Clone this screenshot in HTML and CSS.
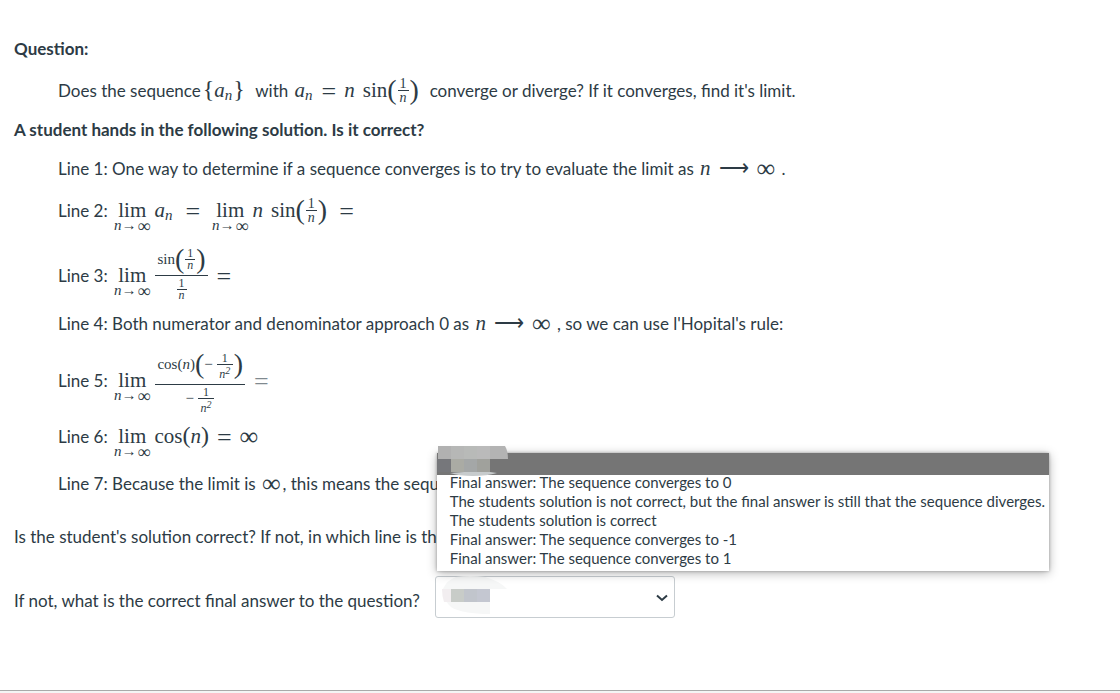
FILE: index.html
```
<!DOCTYPE html>
<html lang="en">
<head>
    <meta charset="UTF-8">
    <meta name="viewport" content="width=device-width, initial-scale=1.0">
    <title>Question</title>
    <link rel="stylesheet" href="styles.css">
</head>
<body>
    <main class="question">
        <p><strong>Question:</strong></p>
        <p class="indent">Does the sequence<span class="math"><span class="brace">{</span><i>a</i><sub>n</sub><span class="brace">}</span></span>&nbsp; with <span class="math"><i>a</i><sub>n</sub><span class="rel">=</span><i>n</i><span class="op">sin</span><span class="paren">(</span><span class="frac"><span>1</span><i>n</i></span><span class="paren">)</span></span>&nbsp; converge or diverge? If it converges, find it's limit.</p>
        <p><strong>A student hands in the following solution. Is it correct?</strong></p>
        <p class="indent">Line 1: One way to determine if a sequence converges is to try to evaluate the limit as <span class="math"><i>n</i><span class="arrow">⟶</span><span class="inf">∞</span></span> .</p>
        <p class="indent">Line 2: <span class="math"><span class="lim"><span>lim</span><small><i>n</i>→<span class="inf">∞</span></small></span><i>a</i><sub>n</sub><span class="rel wide">=</span><span class="lim"><span>lim</span><small><i>n</i>→<span class="inf">∞</span></small></span><i>n</i><span class="op">sin</span><span class="paren">(</span><span class="frac"><span>1</span><i>n</i></span><span class="paren">)</span><span class="rel wide">=</span></span></p>
        <p class="indent">Line 3: <span class="math"><span class="lim"><span>lim</span><small><i>n</i>→<span class="inf">∞</span></small></span><span class="frac big"><span class="num">sin<span class="paren">(</span><span class="frac tiny"><span>1</span><i>n</i></span><span class="paren">)</span></span><span class="den"><span class="frac tiny"><span>1</span><i>n</i></span></span></span><span class="rel">=</span></span></p>
        <p class="indent">Line 4: Both numerator and denominator approach 0 as <span class="math"><i>n</i><span class="arrow">⟶</span><span class="inf">∞</span></span> , so we can use l'Hopital's rule:</p>
        <p class="indent">Line 5: <span class="math"><span class="lim"><span>lim</span><small><i>n</i>→<span class="inf">∞</span></small></span><span class="frac big"><span class="num">cos(<i>n</i>)<span class="paren">(</span>−<span class="frac tiny power"><span>1</span><span><i>n</i><sup>2</sup></span></span><span class="paren">)</span></span><span class="den">−<span class="frac tiny power"><span>1</span><span><i>n</i><sup>2</sup></span></span></span></span><span class="rel faint">=</span></span></p>
        <p class="indent">Line 6: <span class="math"><span class="lim"><span>lim</span><small><i>n</i>→<span class="inf">∞</span></small></span>cos<span class="brace">(</span><i>n</i><span class="brace">)</span><span class="rel">=</span><span class="inf">∞</span></span></p>
        <p class="indent">Line 7: Because the limit is <span class="math"><span class="inf">∞</span></span>, this means the sequence diverges.</p>
        <p class="answer">Is the student's solution correct? If not, in which line is the error?</p>
        <div class="answer">
            <label for="final">If not, what is the correct final answer to the question?</label>
            <div class="dropdown">
                <select id="final" name="final">
                    <option value=""></option>
                    <option>Final answer: The sequence converges to 0</option>
                    <option>The students solution is not correct, but the final answer is still that the sequence diverges.</option>
                    <option>The students solution is correct</option>
                    <option>Final answer: The sequence converges to -1</option>
                    <option>Final answer: The sequence converges to 1</option>
                </select>
                <svg class="chevron" width="12" height="8" viewBox="0 0 12 8" aria-hidden="true"><path d="M1 1.500L6 6l5-4.500" fill="none" stroke="#2d3b45" stroke-width="2"/></svg>
                <svg class="smudge-value" width="66" height="39" viewBox="0 0 66 39" aria-hidden="true">
                    <path d="M1 13Q5 4 14 1q14-2 29 0 15 4 22 12H48v25Q20 38 9 31Q2 25 1 13z" fill="#f6f7f7"/>
                    <path d="M0 13h9v13H2Q0 20 0 13z" fill="#f2eef0"/>
                    <path d="M9 13h13v13H9z" fill="#c8ccc8"/>
                    <path d="M22 13h13v13H22z" fill="#c1c5cc"/>
                    <path d="M35 13h13v13H35z" fill="#c4c7d1"/>
                </svg>
                <ul class="menu" role="listbox">
                    <li class="selected" role="option" aria-selected="true"></li>
                    <li role="option">Final answer: The sequence converges to 0</li>
                    <li role="option">The students solution is not correct, but the final answer is still that the sequence diverges.</li>
                    <li role="option">The students solution is correct</li>
                    <li role="option">Final answer: The sequence converges to -1</li>
                    <li role="option">Final answer: The sequence converges to 1</li>
                </ul>
                <svg class="smudge-menu" width="71" height="30" viewBox="0 0 71 30" aria-hidden="true">
                    <path d="M1 0h13v13H1z" fill="#b1b1b1"/>
                    <path d="M14 0h13v13H14z" fill="#b6b7b6"/>
                    <path d="M27 0h13v13H27z" fill="#b8bab8"/>
                    <path d="M40 0h13v13H40z" fill="#bababa"/>
                    <path d="M53 0h15q3 5 3 13H53z" fill="#b3b3b3"/>
                    <path d="M0 13h14v13H0z" fill="#76777b"/>
                    <path d="M14 13h13v13H14z" fill="#aaaba4"/>
                    <path d="M27 13h13v13H27z" fill="#a4a7a7"/>
                    <path d="M40 13h13v13H40z" fill="#a0a19c"/>
                    <path d="M13 27l14-1h26l7 1q-10 3-24 3t-23-3z" fill="#c7cbcc"/>
                </svg>
            </div>
        </div>
    </main>
    <footer class="footer"></footer>
</body>
</html>
```

FILE: styles.css
```
* {
    box-sizing: border-box;
}

body {
    display: flex;
    flex-direction: column;
    min-height: 100vh;
    margin: 0;
    background-color: #fff;
    color: #2d3b45;
    font-family: Lato, sans-serif;
    font-size: 17px;
    line-height: 24px;
}

.question {
    flex: 1;
    padding: 37px 14px 0;
}

p {
    margin: 0 0 15px;
    white-space: nowrap;
}

.indent {
    padding-left: 44px;
}

/* formulas */
.math {
    margin: 0 2px;
    font-family: "Liberation Serif", serif;
    font-size: 21px;
    line-height: 20px;
}

sub,
sup {
    font-size: 15px;
    font-style: italic;
    line-height: 0;
}

sub {
    margin-right: 1px;
    vertical-align: -3px;
}

.brace {
    font-size: 24px;
    line-height: 0;
}

.rel {
    margin: 0 8px;
    font-size: 26px;
    line-height: 0;
    vertical-align: -3px;
}

.wide {
    margin: 0 12px;
}

.faint {
    opacity: 0.6;
}

.op {
    margin-left: 8px;
}

.inf {
    font-size: 26px;
    line-height: 0;
    vertical-align: -2px;
}

.arrow {
    margin: 0 8px;
}

.lim {
    display: inline-flex;
    flex-direction: column;
    align-items: center;
    margin-right: 4px;
}

.lim small {
    font-size: 15px;
    line-height: 11px;
}

.lim .inf {
    margin-left: 1px;
    font-size: 18px;
}

.paren {
    font-size: 28px;
    line-height: 0;
    vertical-align: -2px;
}

.frac {
    display: inline-flex;
    flex-direction: column;
    align-items: center;
    margin: 1px 1px -1px;
    vertical-align: 9px;
    font-size: 14px;
    line-height: 13px;
}

.frac > :first-child {
    align-self: stretch;
    padding: 0 2px;
    border-bottom: 1px solid;
    text-align: center;
}

.big {
    margin: 2px 1px -4px;
    vertical-align: 18px;
    font-size: 15px;
}

.big > .num {
    padding: 0 2px 4px;
}

.big .paren {
    vertical-align: -4px;
}

.den {
    padding-top: 2px;
}

.tiny {
    margin: 0 1px;
    vertical-align: 7px;
    font-size: 12px;
    line-height: 11px;
}

.power {
    margin-left: 4px;
}

.power > :first-child {
    padding: 0 5px;
}

.power > :last-child {
    padding-top: 4px;
}

.tiny sup {
    font-size: 10px;
    vertical-align: 4px;
}

/* answers */
.answer {
    display: flex;
    align-items: center;
    gap: 15px;
    min-height: 42px;
    margin: 20px 0 0;
    white-space: nowrap;
}

.answer + .answer {
    margin-top: 18px;
}

.answer label {
    padding-top: 8px;
}

.dropdown {
    position: relative;
    width: 240px;
}

select {
    display: block;
    width: 100%;
    height: 42px;
    padding: 0 12px;
    border: 1px solid #c7cdd1;
    border-radius: 3px;
    background-color: #fff;
    color: inherit;
    font: inherit;
    appearance: none;
}

.chevron {
    position: absolute;
    top: 18px;
    right: 7px;
}

.menu {
    position: absolute;
    bottom: 47px;
    left: 2px;
    margin: 0;
    padding: 0 0 3px;
    background-color: #fff;
    box-shadow: 0 0 3px rgba(0, 0, 0, 0.3), 0 2px 10px rgba(0, 0, 0, 0.3);
    font-size: 15px;
    line-height: 19px;
    list-style: none;
}

.menu li {
    padding: 0 4px 0 13px;
}

.menu .selected {
    height: 22px;
    margin-bottom: -2px;
    background-color: #757575;
}

.smudge-value {
    position: absolute;
    top: 0;
    left: 7px;
}

.smudge-menu {
    position: absolute;
    bottom: 142px;
    left: 2px;
}

.footer {
    height: 3px;
    border-top: 1px solid #aaa;
    background-color: #f5f5f5;
}
```
